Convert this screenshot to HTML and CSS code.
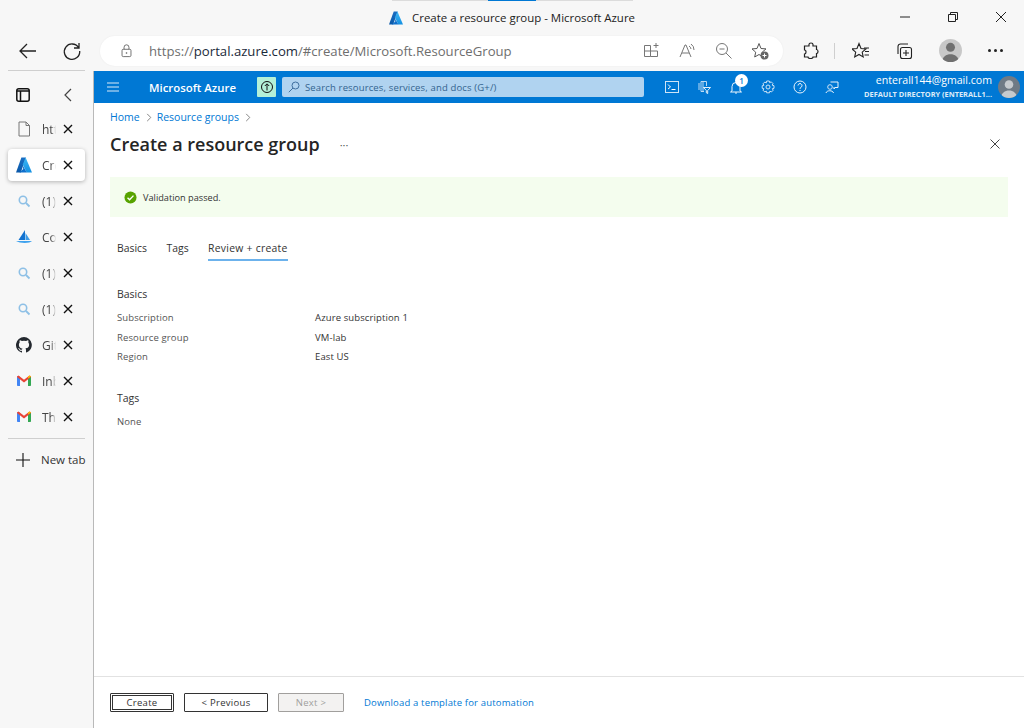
FILE: index.html
```html
<!DOCTYPE html>
<html lang="en">
<head>
<meta charset="utf-8">
<title>Create a resource group - Microsoft Azure</title>
<link rel="stylesheet" href="styles.css">
</head>
<body>
<div class="window">
  <div class="strip"><span class="seg grey1"></span><span class="seg blue"></span><span class="seg grey2"></span></div>
  <header class="titlebar">
    <div class="wintitle">
      <svg class="ic14" viewBox="0 0 16 16"><defs><linearGradient id="azl" x1="0" y1="0" x2="0" y2="1"><stop offset="0" stop-color="#1a6fc4"/><stop offset="1" stop-color="#0a58a8"/></linearGradient><linearGradient id="azr" x1="0" y1="0" x2="0" y2="1"><stop offset="0" stop-color="#3fb8f4"/><stop offset="1" stop-color="#1490e2"/></linearGradient></defs><path fill="url(#azl)" d="M5.400 .5h4.600L4.800 15.500H0z"/><path fill="url(#azr)" d="M9.600 .5 16 15.500h-5.400L6.800 7.500z"/><path fill="#0f70cc" d="M6.800 8.500 10.800 15.500H3.400l3.800-3.600z"/></svg>
      <span>Create a resource group - Microsoft Azure</span>
    </div>
    <div class="winctl">
      <svg class="ctl" viewBox="0 0 12 12"><path d="M1 6h10" stroke="#222" fill="none"/></svg>
      <svg class="ctl" viewBox="0 0 12 12"><path d="M1.500 3.500h7v7h-7zM3.500 3.500v-2h7v7h-2" stroke="#222" fill="none"/></svg>
      <svg class="ctl" viewBox="0 0 12 12"><path d="M1 1l10 10M11 1 1 11" stroke="#222" fill="none"/></svg>
    </div>
  </header>
  <div class="toolbar">
    <svg class="nav back" viewBox="0 0 20 20"><path d="M18 10H2M9 3l-7 7 7 7" fill="none" stroke="#222" stroke-width="1.300"/></svg>
    <svg class="nav reload" viewBox="0 0 20 20"><path d="M16.500 6.500A7.700 7.700 0 1 0 17.700 10M17 2v5h-5" fill="none" stroke="#222" stroke-width="1.300"/></svg>
    <div class="address">
      <svg class="lock" viewBox="0 0 16 16"><rect x="2.500" y="6.500" width="11" height="9" rx="1.500" fill="none" stroke="#555"/><path d="M5 6.500V4a3 3 0 0 1 6 0v2.500" fill="none" stroke="#555"/><circle cx="8" cy="11" r="1" fill="#555"/></svg>
      <span class="url">https://<b>portal.azure.com</b>/#create/Microsoft.ResourceGroup</span>
      <div class="addr-icons">
        <svg class="ai" viewBox="0 0 18 18"><path d="M1.500 3.500h6v11h-6zM7.500 9h7v5.500h-7M1.500 9h6M10.500 3.500h5M13 1v5" fill="none" stroke="#777"/></svg>
        <svg class="ai" viewBox="0 0 18 18"><path d="M1 15 6 3h1l5 12M3 11h7" fill="none" stroke="#777"/><path d="M10 4a4 4 0 0 1 2 3M12 2a7 7 0 0 1 3 6" fill="none" stroke="#777"/></svg>
        <svg class="ai" viewBox="0 0 18 18"><circle cx="7" cy="7" r="5.500" fill="none" stroke="#777"/><path d="M4.500 7h5M11 11l5.500 5.500" fill="none" stroke="#777"/></svg>
        <svg class="ai" viewBox="0 0 18 18"><path d="M8 1.500 10 6.500l5 .4-3.800 3.300 1 4.800L8 12.500 3.700 15l1-4.800L1 6.900l5-.4z" fill="none" stroke="#555"/><circle cx="13.500" cy="13.500" r="4" fill="#666"/><path d="M13.500 11.500v4M11.500 13.500h4" stroke="#fff"/></svg>
      </div>
    </div>
    <div class="tools">
      <svg class="ti" viewBox="0 0 18 18"><path d="M7 2.500c0-2 4-2 4 0V4h3.500v3.500c2 0 2 4 0 4V15H11c0 2-5 2-5 0H2.500v-3c2 0 2-4 0-4V4H7z" fill="none" stroke="#222" stroke-width="1.200"/></svg>
      <span class="vsep"></span>
      <svg class="ti" viewBox="0 0 18 18"><path d="M7 1.500 9 6.500l5 .4-3.800 3.300 1 4.800L7 12.500 2.700 15l1-4.800L0 6.900l5-.4z" fill="none" stroke="#222" stroke-width="1.100"/><path d="M12 6h5M13 9.500h4M12.500 13h4.500" stroke="#222"/></svg>
      <svg class="ti" viewBox="0 0 18 18"><rect x="5.500" y="5.500" width="11" height="11" rx="2" fill="none" stroke="#222" stroke-width="1.100"/><path d="M11 8v6M8 11h6M3 12V4.500A2.500 2.500 0 0 1 5.500 2H13" fill="none" stroke="#222" stroke-width="1.100"/></svg>
      <span class="avatar"><svg viewBox="0 0 22 22"><circle cx="11" cy="8" r="4.300" fill="#707070"/><path d="M3 22c0-10 16-10 16 0z" fill="#707070"/></svg></span>
      <span class="more"><i></i><i></i><i></i></span>
    </div>
  </div>
  <div class="body">
    <aside class="sidebar">
      <div class="side-top">
        <svg class="panel" viewBox="0 0 14 14"><rect x=".8" y=".8" width="12.400" height="12.400" rx="2" fill="none" stroke="#111" stroke-width="1.500"/><path d="M.8 3h12.400M4.500 3v10" stroke="#111" stroke-width="1.500"/></svg>
        <svg class="chev" viewBox="0 0 10 14"><path d="M8 1 2 7l6 6" fill="none" stroke="#444" stroke-width="1.200"/></svg>
      </div>
      <ul class="tabs">
        <li class="tab"><svg class="tabicon" viewBox="0 0 16 16"><path d="M3 1h7l3.500 3.500V15H3z M10 1v3.500h3.500" fill="none" stroke="#777"/></svg><span class="tabname">https</span><svg class="tabx" viewBox="0 0 10 10"><path d="M1 1l8 8M9 1 1 9" stroke="#111" stroke-width="1.400"/></svg></li>
        <li class="tab active"><svg class="tabicon" viewBox="0 0 16 16"><path fill="url(#azl)" d="M5.400 .5h4.600L4.800 15.500H0z"/><path fill="url(#azr)" d="M9.600 .5 16 15.500h-5.400L6.800 7.500z"/><path fill="#0f70cc" d="M6.800 8.500 10.800 15.500H3.400l3.800-3.600z"/></svg><span class="tabname">Create</span><svg class="tabx" viewBox="0 0 10 10"><path d="M1 1l8 8M9 1 1 9" stroke="#111" stroke-width="1.400"/></svg></li>
        <li class="tab"><svg class="tabicon" viewBox="0 0 16 16"><circle cx="7" cy="7" r="3.700" fill="none" stroke="#8ec0e6" stroke-width="1.600"/><path d="M10 10l3.500 3.500" stroke="#8ec0e6" stroke-width="1.800"/></svg><span class="tabname">(1) Q</span><svg class="tabx" viewBox="0 0 10 10"><path d="M1 1l8 8M9 1 1 9" stroke="#111" stroke-width="1.400"/></svg></li>
        <li class="tab"><svg class="tabicon" viewBox="0 0 16 16"><path fill="#1272d0" d="M9 1v10H2.500z"/><path fill="#3b9be8" d="M9.500 4 14 11H9.500z"/><path fill="#3fa2ee" d="M0 12h16c-2 2.500-12 2.500-16 0z"/></svg><span class="tabname">Connect</span><svg class="tabx" viewBox="0 0 10 10"><path d="M1 1l8 8M9 1 1 9" stroke="#111" stroke-width="1.400"/></svg></li>
        <li class="tab"><svg class="tabicon" viewBox="0 0 16 16"><circle cx="7" cy="7" r="3.700" fill="none" stroke="#8ec0e6" stroke-width="1.600"/><path d="M10 10l3.500 3.500" stroke="#8ec0e6" stroke-width="1.800"/></svg><span class="tabname">(1) Q</span><svg class="tabx" viewBox="0 0 10 10"><path d="M1 1l8 8M9 1 1 9" stroke="#111" stroke-width="1.400"/></svg></li>
        <li class="tab"><svg class="tabicon" viewBox="0 0 16 16"><circle cx="7" cy="7" r="3.700" fill="none" stroke="#8ec0e6" stroke-width="1.600"/><path d="M10 10l3.500 3.500" stroke="#8ec0e6" stroke-width="1.800"/></svg><span class="tabname">(1) Q</span><svg class="tabx" viewBox="0 0 10 10"><path d="M1 1l8 8M9 1 1 9" stroke="#111" stroke-width="1.400"/></svg></li>
        <li class="tab"><svg class="tabicon" viewBox="0 0 16 16"><path fill="#24292f" d="M8 0a8 8 0 0 0-2.500 15.600c.4.100.5-.2.500-.4v-1.400c-2.200.5-2.700-1-2.700-1-.4-.9-.9-1.200-.9-1.200-.7-.5.100-.5.100-.5.800.1 1.200.8 1.200.8.700 1.200 1.900.9 2.300.7.100-.5.300-.9.500-1.100-1.800-.2-3.600-.9-3.600-4 0-.9.300-1.600.8-2.100-.1-.2-.4-1 .1-2.100 0 0 .7-.2 2.200.8a7.500 7.500 0 0 1 4 0c1.500-1 2.200-.8 2.200-.8.400 1.100.2 1.900.1 2.100.5.600.8 1.300.8 2.100 0 3.100-1.900 3.700-3.700 3.900.3.300.6.800.6 1.500v2.200c0 .2.100.5.600.4A8 8 0 0 0 8 0z"/></svg><span class="tabname">GitHub</span><svg class="tabx" viewBox="0 0 10 10"><path d="M1 1l8 8M9 1 1 9" stroke="#111" stroke-width="1.400"/></svg></li>
        <li class="tab"><svg class="tabicon" viewBox="0 0 16 16"><path fill="#4285f4" d="M1 3.500h3V13H1.800A.8.800 0 0 1 1 12.200z"/><path fill="#34a853" d="M12 3.500h3v8.700a.8.800 0 0 1-.8.800H12z"/><path fill="#ea4335" d="M1 3.500 2.500 2.500 8 6.700l5.500-4.200 1.500 1v.5L8 9.500 1 4z"/><path fill="#fbbc04" d="M12 5.500 15 3.500v-.2L13.500 2.500 12 3.600z"/></svg><span class="tabname">Inbox</span><svg class="tabx" viewBox="0 0 10 10"><path d="M1 1l8 8M9 1 1 9" stroke="#111" stroke-width="1.400"/></svg></li>
        <li class="tab"><svg class="tabicon" viewBox="0 0 16 16"><path fill="#4285f4" d="M1 3.500h3V13H1.800A.8.800 0 0 1 1 12.200z"/><path fill="#34a853" d="M12 3.500h3v8.700a.8.800 0 0 1-.8.800H12z"/><path fill="#ea4335" d="M1 3.500 2.500 2.500 8 6.700l5.500-4.200 1.500 1v.5L8 9.500 1 4z"/><path fill="#fbbc04" d="M12 5.500 15 3.500v-.2L13.500 2.500 12 3.600z"/></svg><span class="tabname">The</span><svg class="tabx" viewBox="0 0 10 10"><path d="M1 1l8 8M9 1 1 9" stroke="#111" stroke-width="1.400"/></svg></li>
      </ul>
      <div class="newtab">
        <svg class="plus" viewBox="0 0 16 16"><path d="M8 1v14M1 8h14" stroke="#111" stroke-width="1.100"/></svg>
        <span>New tab</span>
      </div>
    </aside>
    <main class="portal">
      <div class="azbar">
        <svg class="burger" viewBox="0 0 12 10"><path d="M0 1h12M0 5h12M0 9h12" stroke="#dbeaf7"/></svg>
        <span class="brand">Microsoft Azure</span>
        <span class="upg"><svg viewBox="0 0 14 14"><circle cx="7" cy="7" r="5.500" fill="none" stroke="#111"/><path d="M7 10.500V4M4.800 6 7 3.800 9.200 6" fill="none" stroke="#111"/></svg></span>
        <div class="search">
          <svg class="mag" viewBox="0 0 12 12"><circle cx="7.500" cy="4.500" r="3.500" fill="none" stroke="#3f6f9f"/><path d="M5 7 .8 11.200" stroke="#3f6f9f"/></svg>
          <span>Search resources, services, and docs (G+/)</span>
        </div>
        <div class="azicons">
          <svg class="az" viewBox="0 0 14 14"><rect x=".5" y="1.500" width="13" height="11" fill="none" stroke="#cfe4f6"/><path d="M3 4.500 5.500 7 3 9M6.500 9.500h4" fill="none" stroke="#fff"/></svg>
          <svg class="az" viewBox="0 0 14 14"><path d="M4 1.500h5.500v4.500M4 1.500v10h3M2 3v7M6 1.500v10" fill="none" stroke="#cfe4f6" stroke-width=".9"/><path d="M6.500 7.500h7l-2.800 3v3l-1.400-.8v-2.200z" fill="none" stroke="#fff" stroke-width=".9"/></svg>
          <span class="bell"><svg class="az" viewBox="0 0 14 14"><path d="M3 11V6.500a4 4 0 0 1 8 0V11l1.500 1h-11zM6 13h2" fill="none" stroke="#eaf4fc"/></svg><b class="badge">1</b></span>
          <svg class="az" viewBox="0 0 14 14"><circle cx="7" cy="7" r="2" fill="none" stroke="#cfe4f6"/><path d="M5.700 1h2.600l.4 1.700 1.500-.9 1.800 1.800-.9 1.500L13 5.700v2.600l-1.700.4.900 1.500-1.800 1.800-1.500-.9-.4 1.700H5.700l-.4-1.700-1.500.9L2 10.200l.9-1.500L1.200 8.300V5.700l1.700-.4L2 3.800 3.800 2l1.500.9z" fill="none" stroke="#cfe4f6"/></svg>
          <svg class="az" viewBox="0 0 14 14"><circle cx="7" cy="7" r="6" fill="none" stroke="#eaf4fc"/><path d="M5 5.500a2 2 0 1 1 3 1.800c-.7.400-1 .8-1 1.500M7 10v1" fill="none" stroke="#fff"/></svg>
          <svg class="az" viewBox="0 0 14 14"><circle cx="5" cy="7" r="2.300" fill="none" stroke="#cfe4f6"/><path d="M1 13c.5-3 7-3 7.500 0M5.500 2h7.500v5.500h-3L9 9V7" fill="none" stroke="#eaf4fc"/></svg>
        </div>
        <div class="account">
          <div class="acct-name">enterall144@gmail.com</div>
          <div class="acct-dir">DEFAULT DIRECTORY (ENTERALL1...</div>
        </div>
        <span class="azavatar"><svg viewBox="0 0 22 22"><circle cx="11" cy="8.500" r="4.300" fill="#c6cace"/><path d="M3 22c0-10 16-10 16 0z" fill="#c6cace"/></svg></span>
      </div>
      <div class="content">
        <nav class="crumbs"><a>Home</a><svg class="sep" viewBox="0 0 6 10"><path d="M1 1l4 4-4 4" fill="none" stroke="#777"/></svg><a>Resource groups</a><svg class="sep" viewBox="0 0 6 10"><path d="M1 1l4 4-4 4" fill="none" stroke="#777"/></svg></nav>
        <div class="heading">
          <h1>Create a resource group</h1>
          <span class="dots">···</span>
          <svg class="close" viewBox="0 0 10 10"><path d="M.5.500l9 9M9.500.500l-9 9" stroke="#444"/></svg>
        </div>
        <div class="banner">
          <svg class="ok" viewBox="0 0 14 14"><circle cx="7" cy="7" r="6.500" fill="#57a300"/><path d="M3.800 7.300 6 9.400l4.200-4.400" fill="none" stroke="#fff" stroke-width="1.500"/></svg>
          <span>Validation passed.</span>
        </div>
        <div class="steps">
          <span class="step">Basics</span>
          <span class="step">Tags</span>
          <span class="step current">Review + create</span>
        </div>
        <section class="summary">
          <h2>Basics</h2>
          <dl class="rows">
            <dt>Subscription</dt><dd>Azure subscription 1</dd>
            <dt>Resource group</dt><dd>VM-lab</dd>
            <dt>Region</dt><dd>East US</dd>
          </dl>
          <h2 class="second">Tags</h2>
          <p class="none">None</p>
        </section>
      </div>
      <footer class="actions">
        <button class="btn primary">Create</button>
        <button class="btn prev">&lt; Previous</button>
        <button class="btn next" disabled>Next &gt;</button>
        <a class="dl">Download a template for automation</a>
      </footer>
    </main>
  </div>
</div>
</body>
</html>
```
FILE: styles.css
```css
* { box-sizing: border-box; }
html, body { margin: 0; padding: 0; height: 100%; }
body { font-family: "Open Sans", "Noto Sans", sans-serif; background: #f7f7f7; color: #222; overflow: hidden; }
svg { display: block; flex: none; }
.window { width: 1024px; height: 728px; display: flex; flex-direction: column; background: #f7f7f7; }
.strip { height: 1px; display: flex; padding-left: 392px; flex: none; }
.seg { display: block; height: 1px; }
.grey1 { width: 96px; background: #dcdcdc; }
.blue { width: 48px; background: #0078d4; }
.grey2 { width: 97px; background: #dcdcdc; }

.titlebar { height: 33px; display: flex; align-items: center; flex: none; }
.wintitle { display: flex; align-items: center; gap: 9px; margin-left: 389px; font-size: 11.450px; color: #222; }
.ic14 { width: 14px; height: 14px; }
.winctl { margin-left: auto; display: flex; gap: 36px; padding-right: 17px; margin-top: -2px; }
.ctl { width: 12px; height: 12px; }

.toolbar { height: 37px; padding-bottom: 4px; display: flex; align-items: center; flex: none; }
.nav { width: 20px; height: 20px; }
.back { margin-left: 18px; }
.reload { margin-left: 24px; }
.address { margin-left: 18px; width: 683px; height: 30px; border-radius: 15px; background: #fff; display: flex; align-items: center; padding-left: 20px; box-shadow: 0 0 2px rgba(0,0,0,.06); }
.lock { width: 13px; height: 15px; }
.url { margin-left: 16px; font-size: 13.150px; color: #6e6e6e; white-space: nowrap; }
.url b { font-weight: 400; color: #1a2a3a; }
.addr-icons { margin-left: auto; display: flex; gap: 18px; padding-right: 14px; align-items: center; }
.ai { width: 18px; height: 18px; }
.tools { display: flex; align-items: center; margin-left: 19px; }
.ti { width: 18px; height: 18px; }
.vsep { width: 1px; height: 16px; background: #cfcfcf; margin: 0 17px 0 14px; }
.tools .ti + .ti { margin-left: 25px; }
.avatar { width: 23px; height: 23px; border-radius: 50%; background: #c8c8c8; overflow: hidden; margin-left: 26px; }
.avatar svg { width: 23px; height: 23px; }
.more { display: flex; gap: 3px; margin-left: 26px; }
.more i { width: 3px; height: 3px; border-radius: 50%; background: #222; display: block; }

.body { flex: 1; display: flex; min-height: 0; }
.sidebar { width: 94px; flex: none; border-right: 1px solid #b9b9b9; padding: 0 8px; }
.side-top { border-top: 1px solid #cfcfcf; margin-top: -1px; height: 43px; display: flex; align-items: center; padding-left: 8px; padding-top: 6px; }
.panel { width: 14px; height: 14px; }
.chev { width: 10px; height: 14px; margin-left: 33px; }
.tabs { list-style: none; margin: 0; padding: 0 0 1px; border-bottom: 1px solid #cfcfcf; }
.tab { height: 32px; margin-bottom: 4px; display: flex; align-items: center; padding-left: 8px; border-radius: 4px; }
.tab.active { background: #fff; box-shadow: 0 1px 4px rgba(0,0,0,.28); }
.tabicon { width: 16px; height: 16px; }
.tabname { width: 14px; margin-left: 10px; overflow: hidden; white-space: nowrap; font-size: 12px; color: #444; -webkit-mask-image: linear-gradient(to right, #000 65%, transparent); mask-image: linear-gradient(to right, #000 65%, transparent); }
.tabx { width: 10px; height: 10px; margin-left: 7px; }
.newtab { display: flex; align-items: center; height: 41px; font-size: 11.500px; color: #333; white-space: nowrap; }
.plus { width: 16px; height: 16px; margin-left: 7px; margin-right: 10px; }

.portal { flex: 1; min-width: 0; display: flex; flex-direction: column; background: #fff; }
.azbar { height: 32px; background: #0078d4; display: flex; align-items: center; color: #fff; flex: none; }
.burger { width: 12px; height: 10px; margin-left: 13px; }
.brand { margin-left: 30px; font-size: 11.400px; font-weight: 600; white-space: nowrap; width: 108px; }
.upg { width: 19px; height: 20px; background: #b4f0d8; border-radius: 1px; display: flex; align-items: center; justify-content: center; }
.upg svg { width: 14px; height: 14px; }
.search { width: 362px; height: 20px; margin-left: 6px; background: #b0d3f0; border-radius: 2px; display: flex; align-items: center; padding-left: 6px; font-size: 9.500px; letter-spacing: .15px; color: #33638f; white-space: nowrap; }
.mag { width: 12px; height: 12px; margin-right: 5px; }
.azicons { display: flex; align-items: center; gap: 18px; margin-left: 21px; }
.az { width: 14px; height: 14px; }
.bell { position: relative; display: block; }
.badge { position: absolute; left: 6px; top: -6px; width: 13px; height: 13px; border-radius: 50%; background: #fff; color: #0078d4; font-size: 8px; line-height: 13px; text-align: center; font-weight: 600; }
.account { margin-left: auto; text-align: right; white-space: nowrap; padding-right: 6px; }
.acct-name { font-size: 10.600px; line-height: 14px; margin-top: -2px; }
.acct-dir { font-size: 7.400px; font-weight: 700; line-height: 12px; margin-top: 1px; color: #dcebf8; }
.azavatar { width: 22px; height: 22px; border-radius: 50%; background: #6f7a85; overflow: hidden; margin-right: 4px; }
.azavatar svg { width: 22px; height: 22px; }

.content { flex: 1; min-height: 0; padding: 7px 16px 0; }
.crumbs { display: flex; align-items: center; height: 14px; font-size: 10.500px; color: #0078d4; }
.crumbs a { color: #0078d4; }
.sep { width: 6px; height: 9px; margin: 0 5px 0 6px; }
.heading { display: flex; align-items: center; height: 28px; margin-top: 6px; }
h1 { margin: 0; font-size: 18px; font-weight: 600; color: #252525; white-space: nowrap; }
.dots { margin-left: 20px; font-size: 11px; color: #555; }
.close { width: 10px; height: 10px; margin-left: auto; margin-right: 8px; }
.banner { height: 40px; margin-top: 19px; width: 898px; background: #f4fdee; display: flex; align-items: center; padding-left: 14px; font-size: 9.200px; color: #333; }
.ok { width: 13px; height: 13px; margin-right: 6px; }
.steps { display: flex; margin-top: 23px; margin-left: 7px; font-size: 10.400px; color: #333; }
.step { height: 21px; margin-right: 19.500px; white-space: nowrap; line-height: 16px; }
.step.current { border-bottom: 2px solid #6cb2ec; width: 80px; letter-spacing: .26px; }
.summary { margin: 26px 0 0 7px; font-size: 9.500px; letter-spacing: .12px; }
h2 { margin: 0; font-size: 10.500px; font-weight: 400; line-height: 14px; color: #333; letter-spacing: 0; }
.rows { margin: 10px 0 0; display: grid; grid-template-columns: 198px 1fr; row-gap: 5.500px; line-height: 14px; }
dt { color: #555; }
dd { margin: 0; color: #333; }
.second { margin-top: 27px; }
.none { margin: 10px 0 0; color: #555; line-height: 14px; }

.actions { height: 52px; flex: none; border-top: 1px solid #e2e2e2; display: flex; align-items: center; padding: 0 16px; gap: 10px; }
.btn { height: 19px; padding: 0; background: #fff; border: 1px solid #333; border-radius: 1px; font-family: inherit; font-size: 9.500px; color: #333; letter-spacing: .3px; }
.primary { width: 64px; outline: 1px solid #333; outline-offset: -3px; }
.prev { width: 84px; }
.next { width: 66px; background: #f3f2f1; border-color: #a19f9d; color: #a19f9d; }
.dl { margin-left: 10px; font-size: 9.500px; color: #0078d4; letter-spacing: .17px; }
```
